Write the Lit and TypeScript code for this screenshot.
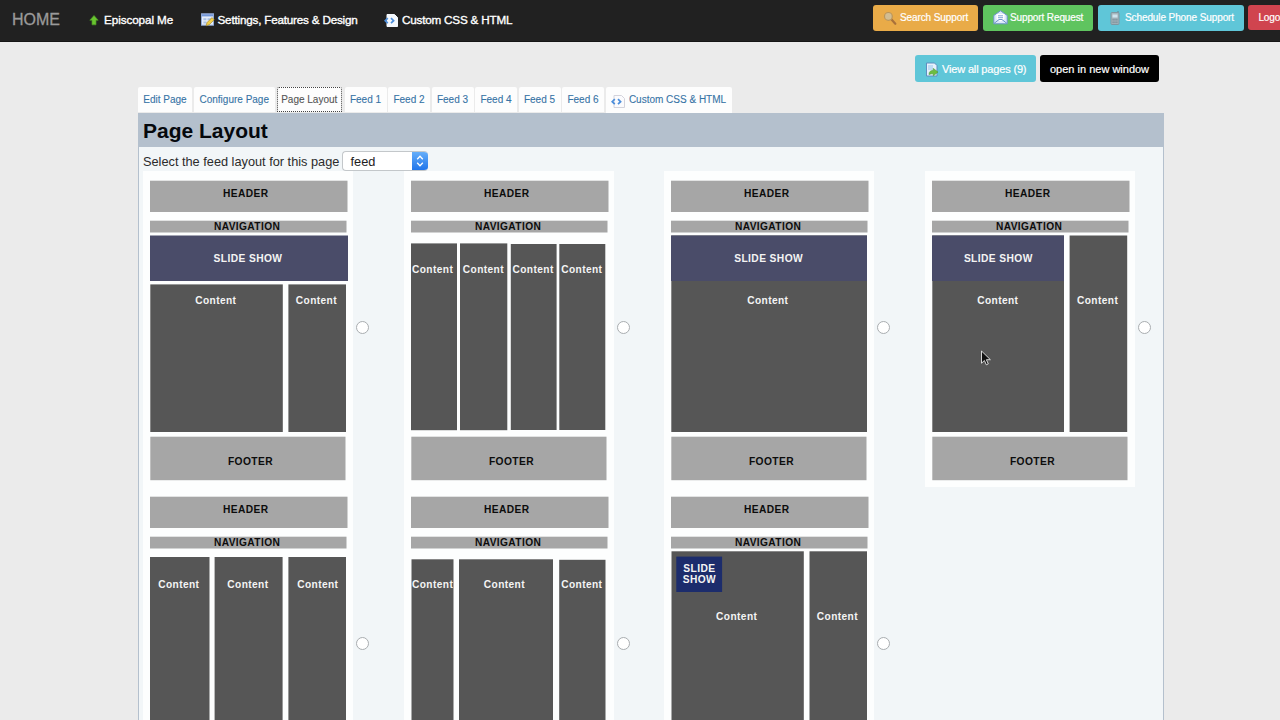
import { LitElement, html, svg, css } from "lit";
import { customElement, property, state } from "lit/decorators.js";

type Box = [x: number, y: number, w: number, h: number, fill: string];
type Label = [text: string, x: number, y: number, length: number, fill: string];
interface Layout {
  boxes: Box[];
  labels: Label[];
}

const GREY = "#a6a6a6";
const DARK = "#565656";
const SLATE = "#4a4c69";
const NAVY = "#1c2c6c";
const INK = "#0c0c0c";
const PALE = "#f4f4f4";

const content = (x: number, y: number): Label => ["Content", x, y, 41.2, PALE];
const slideShow = (x: number): Label => ["SLIDE SHOW", x, 90.8, 68.9, PALE];

const frameBoxes: Box[] = [
  [7, 9.7, 197.5, 31.3, GREY],
  [7, 49.7, 196.5, 11.8, GREY],
];
const frameLabels: Label[] = [
  ["HEADER", 80.1, 25.9, 45.5, INK],
  ["NAVIGATION", 70.9, 59.4, 66.4, INK],
];
const footerBox: Box = [7.3, 265.7, 195.2, 43.5, GREY];
const footerLabel: Label = ["FOOTER", 84.9, 293.9, 45.1, INK];

const layouts: Layout[] = [
  {
    boxes: [[7, 64.5, 198, 45.5, SLATE], [7.3, 113.4, 132.5, 147.6, DARK], [145.4, 113.4, 57.6, 147.6, DARK], footerBox],
    labels: [slideShow(70.5), content(52.2, 132.8), content(152.8, 132.8), footerLabel],
  },
  {
    boxes: [[7, 72.4, 46, 186.8, DARK], [56, 72.4, 47.3, 186.8, DARK], [106.8, 73, 45.8, 186, DARK], [155.3, 73, 46, 186, DARK], footerBox],
    labels: [content(8, 101.6), content(58.8, 101.6), content(108.5, 101.6), content(157.2, 101.6), footerLabel],
  },
  {
    boxes: [[7.3, 64.5, 195.7, 196.5, DARK], [7, 64.5, 196, 45.5, SLATE], footerBox],
    labels: [slideShow(70.2), content(83.2, 132.8), footerLabel],
  },
  {
    boxes: [[7.3, 64.5, 131.7, 196.5, DARK], [7, 64.5, 132, 45.5, SLATE], [144.6, 64.5, 57.6, 196.5, DARK], footerBox],
    labels: [slideShow(38.9), content(52.2, 132.8), content(152, 132.8), footerLabel],
  },
  {
    boxes: [[7, 70, 59.5, 190, DARK], [71.6, 70, 68, 190, DARK], [145.4, 70, 57.6, 190, DARK]],
    labels: [content(15.2, 101), content(84.3, 101), content(154.2, 101)],
  },
  {
    boxes: [[7.5, 72.3, 42, 187, DARK], [55, 72.3, 94, 187, DARK], [155.2, 72.8, 46.3, 186.5, DARK]],
    labels: [content(8, 101), content(79.8, 101), content(157.2, 101)],
  },
  {
    boxes: [[7.5, 64.3, 132.3, 196.5, DARK], [145.5, 64.3, 57.5, 196.5, DARK], [12.3, 69.6, 45.8, 35.4, NAVY]],
    labels: [
      ["SLIDE", 19.3, 84.7, 32.2, PALE],
      ["SHOW", 18.8, 95.7, 33.3, PALE],
      content(52.1, 132.6),
      content(152.8, 132.6),
    ],
  },
];

const arrowIcon = html`<svg width="12" height="13" viewBox="0 0 12 13">
  <path d="M6 1.500 10.200 6.200H8v4.600H4V6.200H1.800Z" fill="#69c42f" stroke="#4c9a26" stroke-width=".7"/></svg>`;
const formIcon = html`<svg width="14" height="14" viewBox="0 0 14 14">
  <rect x=".5" y=".8" width="12" height="11.400" fill="#e6edf9" stroke="#8fa9d8"/>
  <path d="M1 1.200h11v2.200H1z" fill="#7397d8"/>
  <path d="M2.400 5.200h3v2h-3zM2.400 8.600h3v2h-3zM6.500 5.200H11v2H6.500z" fill="#a9c1e6"/>
  <path d="m5 12.800 1-3.200 5-5 2.200 2.200-5 5Z" fill="#f1cf4a" stroke="#9a7c25" stroke-width=".6"/></svg>`;
const codeIcon = (edge: string, fill: string) => html`<svg width="15" height="15" viewBox="0 0 15 15">
  <path d="M3 1.500h7.500l3 3V13.500H3Z" fill=${fill} stroke=${edge} stroke-width="1"/>
  <path d="M3.800 5.200 1.200 7.700l2.600 2.500M7 5.200l2.600 2.500L7 10.200" fill="none" stroke="#4c8edb" stroke-width="1.700"/></svg>`;
const searchIcon = html`<svg width="14" height="14" viewBox="0 0 14 14">
  <path d="m8.300 8.300 4 4.500" stroke="#a9713a" stroke-width="2.200" stroke-linecap="round"/>
  <circle cx="5.400" cy="5.400" r="3.900" fill="#d2bd92" stroke="#bb9558" stroke-width="1.200"/></svg>`;
const mailIcon = html`<svg width="15" height="15" viewBox="0 0 15 15">
  <path d="M.8 5.500 7.500.8l6.700 4.700v8.300H.8Z" fill="#dbe9fa" stroke="#6d93cb"/>
  <path d="M3.500 4h8v5l-4 2.500-4-2.500Z" fill="#fff"/>
  <path d="M5 5.800h5M5 7.700h5" stroke="#7fa4d8"/>
  <path d="m1 13.500 5-4h3l5 4" fill="none" stroke="#6d93cb"/></svg>`;
const phoneIcon = html`<svg width="10" height="14" viewBox="0 0 10 14">
  <path d="M8 0v2" stroke="#66808c"/>
  <rect x="1" y="1.500" width="8" height="12" rx="1" fill="#a5b6bd" stroke="#7f97a1"/>
  <path d="M2.500 3.500h5v3h-5z" fill="#cfe4ee"/>
  <path d="M2.500 8.300h5M2.500 10h5M2.500 11.700h5" stroke="#6c838e" stroke-dasharray="1.200 .7"/></svg>`;
const pageIcon = html`<svg width="14" height="15" viewBox="0 0 14 15">
  <path d="M1.500 1h8L12 3.500V14H1.500Z" fill="#e6f1fc" stroke="#5f8ec0"/>
  <path d="M3 3h5v5H3z" fill="#bfdcf3"/>
  <path d="M4 12.600c0-3 1.500-4.200 4.300-4.200V6.400L13 10.100l-4.700 3.700v-2c-2 0-3 .2-4.300.8Z" fill="#6cbd40" stroke="#4d9a36" stroke-width=".6"/></svg>`;

@customElement("layout-thumb")
class LayoutThumb extends LitElement {
  @property({ attribute: false }) layout!: Layout;

  static styles = css`
    :host { display: block; width: 210px; height: 316px; background: #fdfefe; }
    svg { display: block; }
    text { font: bold 10px "Liberation Sans", Arial, sans-serif; letter-spacing: .4px; }
  `;

  render() {
    const boxes = [...frameBoxes, ...this.layout.boxes];
    const labels = [...frameLabels, ...this.layout.labels];
    return html`<svg width="210" height="316" viewBox="0 0 210 316">
      ${boxes.map(([x, y, w, h, fill]) => svg`<rect x=${x} y=${y} width=${w} height=${h} fill=${fill}></rect>`)}
      ${labels.map(([t, x, y, len, fill]) => svg`<text x=${x} y=${y} textLength=${len} lengthAdjust="spacingAndGlyphs" fill=${fill}>${t}</text>`)}
    </svg>`;
  }
}

@customElement("app-root")
class AppRoot extends LitElement {
  @state() private tab = 2;

  static styles = css`
    :host {
      display: block; position: relative; width: 1280px; height: 720px; overflow: hidden;
      background: #ebebeb; font-family: "Liberation Sans", Arial, sans-serif; color: #2b2b2b;
    }
    * { box-sizing: border-box; }
    svg { display: block; flex: none; }
    .bar {
      display: flex; align-items: flex-start; height: 42px; background: #212121;
      border-bottom: 1px solid #151515; white-space: nowrap; overflow: hidden;
    }
    .brand { flex: none; width: 76px; padding-left: 12px; font-size: 16px; line-height: 40px; color: #9a9a9a; -webkit-text-stroke: .3px #9a9a9a; }
    .nav { display: flex; flex: none; align-items: center; height: 40px; font-size: 11.700px; color: #fff; -webkit-text-stroke: .35px #fff; }
    .nav span { padding-bottom: 2px; }
    .n1 { width: 112px; padding-left: 12px; gap: 4px; letter-spacing: -.08px; }
    .n2 { width: 196px; padding-left: 13px; gap: 2.500px; letter-spacing: -.2px; }
    .n3 { width: 489px; gap: 3px; letter-spacing: -.2px; }
    .actions { display: flex; gap: 5px; padding-top: 5px; flex: none; }
    .btn {
      display: flex; align-items: center; height: 26px; border-radius: 3px; color: #fff; flex: none;
      font-size: 10px; padding: 0 0 1px 10px; gap: 3px; letter-spacing: -.1px; -webkit-text-stroke: .2px #fff;
    }
    .search { width: 105px; background: #e9ab48; }
    .request { width: 110px; background: #5fc45f; gap: 2px; letter-spacing: -.12px; }
    .phone { width: 146px; background: #5fc6d8; padding-left: 12px; gap: 5px; letter-spacing: -.1px; }
    .logout { width: 60px; height: 25px; margin-left: -.6px; background: #d0444f; }
    .tools { display: flex; justify-content: flex-end; gap: 4px; padding: 13px 121px 0 0; }
    .tools .btn { height: 27px; font-size: 11px; padding-bottom: 0; }
    .pages { width: 121px; background: #5fc6d8; letter-spacing: -.16px; }
    .pages svg { margin-top: 2px; }
    .open { width: 119px; background: #000; letter-spacing: 0; }
    .tabs { display: flex; gap: 1.500px; height: 31px; padding: 5px 0 0 138px; font-size: 10px; color: #3673a5; -webkit-text-stroke: .1px currentColor; }
    .tab {
      display: flex; align-items: center; justify-content: center; height: 25px; width: 42px; flex: none;
      background: #fdfdfd; border-radius: 2px 2px 0 0; white-space: nowrap; cursor: pointer;
    }
    .t0 { width: 54px; }
    .t1 { width: 81.500px; }
    .t2 { width: 65.500px; margin-right: 1px; }
    .t9 { width: 126px; height: 26px; gap: 3px; padding-bottom: 1px; }
    .t9 svg { margin-top: 4px; }
    .active { color: #555; border: 1px dotted #444; }
    .panel { width: 1026px; height: 620px; margin-left: 138px; background: #f2f6f8; border: 1px solid #b4c0cd; border-width: 0 1px; }
    .title {
      margin: 0; height: 34px; padding-left: 4px; background: #b4c0cd; color: #05080c;
      font-size: 21px; line-height: 36px; font-weight: bold;
    }
    .choose { display: flex; align-items: center; height: 24px; padding: 4px 0 0 4px; font-size: 12.750px; white-space: nowrap; }
    .prompt { width: 199px; padding-top: 1px; }
    .select {
      display: flex; justify-content: space-between; width: 85.500px; height: 20px; padding-left: 7.500px;
      background: #fff; border: 1px solid #c3c7ca; border-right: 0; border-radius: 4px; line-height: 20px; overflow: hidden; color: #1d1d1d;
    }
    .knob { width: 16px; height: 20px; margin-top: -1px; background: linear-gradient(#69b1fa, #1c72ea); }
    .grid { display: grid; grid-template-columns: 261px 260px 261px 236px; padding-left: 4px; }
    .cell { display: flex; align-items: center; gap: 3px; height: 316px; }
    .radio { width: 13px; height: 13px; border: 1px solid #a9adb0; border-radius: 50%; background: #fff; margin-bottom: 3px; }
    .cursor { position: absolute; left: 980px; top: 350px; }
  `;

  render() {
    const tabs = ["Edit Page", "Configure Page", "Page Layout", "Feed 1", "Feed 2", "Feed 3", "Feed 4", "Feed 5", "Feed 6", "Custom CSS & HTML"];
    return html`
      <header class="bar">
        <div class="brand">HOME</div>
        <div class="nav n1">${arrowIcon}<span>Episcopal Me</span></div>
        <div class="nav n2">${formIcon}<span>Settings, Features &amp; Design</span></div>
        <div class="nav n3">${codeIcon("#f4f8fd", "#f4f8fd")}<span>Custom CSS &amp; HTML</span></div>
        <div class="actions">
          <div class="btn search">${searchIcon}<span>Search Support</span></div>
          <div class="btn request">${mailIcon}<span>Support Request</span></div>
          <div class="btn phone">${phoneIcon}<span>Schedule Phone Support</span></div>
          <div class="btn logout">Logout</div>
        </div>
      </header>
      <div class="tools">
        <div class="btn pages">${pageIcon}<span>View all pages (9)</span></div>
        <div class="btn open">open in new window</div>
      </div>
      <nav class="tabs">
        ${tabs.map((t, i) => html`<div class="tab t${i} ${i === this.tab ? "active" : ""}" @click=${() => (this.tab = i)}>
          ${i === 9 ? codeIcon("#d3d3dc", "#fbfbfd") : ""}<span>${t}</span></div>`)}
      </nav>
      <main class="panel">
        <h1 class="title">Page Layout</h1>
        <div class="choose"><span class="prompt">Select the feed layout for this page</span>
          <div class="select"><span>feed</span><div class="knob"><svg width="16" height="20" viewBox="0 0 16 20">
            <path d="M5.200 8.200 8 5.300l2.800 2.900M5.200 11.800 8 14.700l2.800-2.900" fill="none" stroke="#fff" stroke-width="1.300"/></svg></div></div>
        </div>
        <div class="grid">
          ${layouts.map((l) => html`<div class="cell"><layout-thumb .layout=${l}></layout-thumb><div class="radio"></div></div>`)}
        </div>
      </main>
      <svg class="cursor" width="12" height="17" viewBox="0 0 12 17">
        <path d="M1.500 1v12.200l2.900-2.700 1.900 4.300 2-.9-1.900-4.200h4Z" fill="#111" stroke="#e8e8e8" stroke-width=".9"/></svg>
    `;
  }
}
